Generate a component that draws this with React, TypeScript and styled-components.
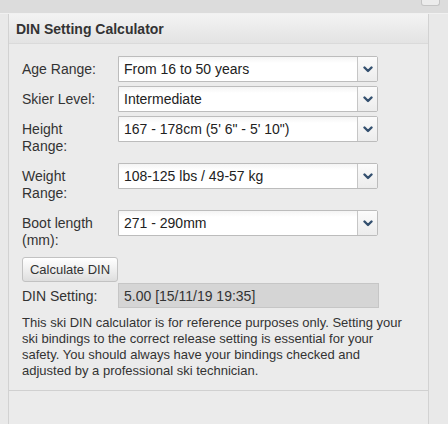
import { createGlobalStyle } from 'styled-components'
import styled from 'styled-components'

const GlobalStyle = createGlobalStyle`
  html, body {
    margin: 0;
    padding: 0;
    background: #e9e9e9;
    font-family: 'Liberation Sans', Arial, sans-serif;
    color: #333;
  }
`

const Page = styled.div`
  display: flex;
  flex-direction: column;
  width: 448px;
  height: 424px;
  overflow: hidden;
`

const TopBar = styled.div`
  display: flex;
  justify-content: flex-end;
  height: 13px;
  padding-right: 8px;
  background: #dcdcdc;
  border-bottom: 1px solid #f1f1f1;
`

const TabStub = styled.div`
  width: 17px;
  height: 5px;
  background: #ececec;
  border: 1px solid #c4c4c4;
  border-top: none;
  border-radius: 0 0 3px 3px;
`

const Column = styled.div`
  flex: 1;
  width: 419px;
  margin-left: 8px;
  border-left: 1px solid #d2d2d2;
  border-right: 1px solid #d2d2d2;
  background: #ebebeb;
`

const Panel = styled.section`
  border-bottom: 1px solid #d0d0d0;
`

const PanelHeader = styled.h2`
  margin: 0;
  height: 30px;
  display: flex;
  align-items: center;
  padding-left: 7px;
  font-size: 14px;
  font-weight: bold;
  color: #333;
  background: linear-gradient(#f3f3f3, #e3e3e3);
  border-bottom: 1px solid #dadada;
  box-sizing: border-box;
`

const PanelBody = styled.div`
  display: flex;
  flex-direction: column;
  padding: 12px 13px 11px;
`

const Fields = styled.div`
  display: flex;
  flex-direction: column;
  gap: 4px;
`

const Row = styled.div`
  display: flex;
  align-items: flex-start;
`

const Label = styled.div`
  width: 86px;
  margin-right: 10px;
  padding: 5px 0 4px;
  font-size: 14px;
  line-height: 17px;
  color: #333;
`

const SelectBox = styled.div`
  display: flex;
  width: 260px;
  height: 26px;
  box-sizing: border-box;
  border: 1px solid #bcbcbc;
  border-radius: 0 2px 2px 0;
  background: linear-gradient(#f4f4f4, #ffffff 6px);
`

const SelectText = styled.span`
  flex: 1;
  display: flex;
  align-items: center;
  padding-left: 5px;
  font-size: 14px;
  color: #222;
  white-space: nowrap;
  overflow: hidden;
`

const ArrowBox = styled.span`
  width: 19px;
  display: flex;
  align-items: center;
  justify-content: center;
  border-left: 1px solid #c6c6c6;
  background: linear-gradient(#fbfbfb, #ececec);
`

const CalcButton = styled.button`
  align-self: flex-start;
  margin-top: 4px;
  height: 25px;
  width: 96px;
  padding: 0;
  font-family: inherit;
  font-size: 13px;
  color: #333;
  border: 1px solid #c2c2c2;
  border-radius: 3px;
  background: linear-gradient(#ffffff, #ececec 60%, #dedede);
`

const ResultRow = styled.div`
  display: flex;
  align-items: center;
  margin-top: 1px;
`

const ResultLabel = styled.div`
  width: 96px;
  font-size: 14px;
  color: #333;
`

const ResultBox = styled.div`
  width: 261px;
  height: 25px;
  box-sizing: border-box;
  display: flex;
  align-items: center;
  padding-left: 5px;
  font-size: 14px;
  color: #333;
  background: #d5d5d5;
  border: 1px solid #c6c6c6;
`

const Note = styled.p`
  margin: 7px 0 0;
  font-size: 13px;
  line-height: 16px;
  color: #333;
  white-space: nowrap;
`

function Chevron() {
  return (
    <svg width="10" height="7" viewBox="0 0 10 7">
      <polyline
        points="1.5,1.5 5,5 8.5,1.5"
        fill="none"
        stroke="#34506f"
        strokeWidth="2.4"
        strokeLinecap="round"
        strokeLinejoin="round"
      />
    </svg>
  )
}

const fields = [
  { label: 'Age Range:', value: 'From 16 to 50 years' },
  { label: 'Skier Level:', value: 'Intermediate' },
  { label: 'Height Range:', value: '167 - 178cm (5\' 6" - 5\' 10")' },
  { label: 'Weight Range:', value: '108-125 lbs / 49-57 kg' },
  { label: 'Boot length (mm):', value: '271 - 290mm' },
]

const noteLines = [
  'This ski DIN calculator is for reference purposes only. Setting your',
  'ski bindings to the correct release setting is essential for your',
  'safety. You should always have your bindings checked and',
  'adjusted by a professional ski technician.',
]

export default function App() {
  return (
    <Page>
      <GlobalStyle />
      <TopBar>
        <TabStub />
      </TopBar>
      <Column>
        <Panel>
          <PanelHeader>DIN Setting Calculator</PanelHeader>
          <PanelBody>
            <Fields>
              {fields.map((f) => (
                <Row key={f.label}>
                  <Label>{f.label}</Label>
                  <SelectBox>
                    <SelectText>{f.value}</SelectText>
                    <ArrowBox>
                      <Chevron />
                    </ArrowBox>
                  </SelectBox>
                </Row>
              ))}
            </Fields>
            <CalcButton>Calculate DIN</CalcButton>
            <ResultRow>
              <ResultLabel>DIN Setting:</ResultLabel>
              <ResultBox>5.00 [15/11/19 19:35]</ResultBox>
            </ResultRow>
            <Note>
              {noteLines.map((line, i) => (
                <span key={i}>
                  {line}
                  {i < noteLines.length - 1 && <br />}
                </span>
              ))}
            </Note>
          </PanelBody>
        </Panel>
      </Column>
    </Page>
  )
}
